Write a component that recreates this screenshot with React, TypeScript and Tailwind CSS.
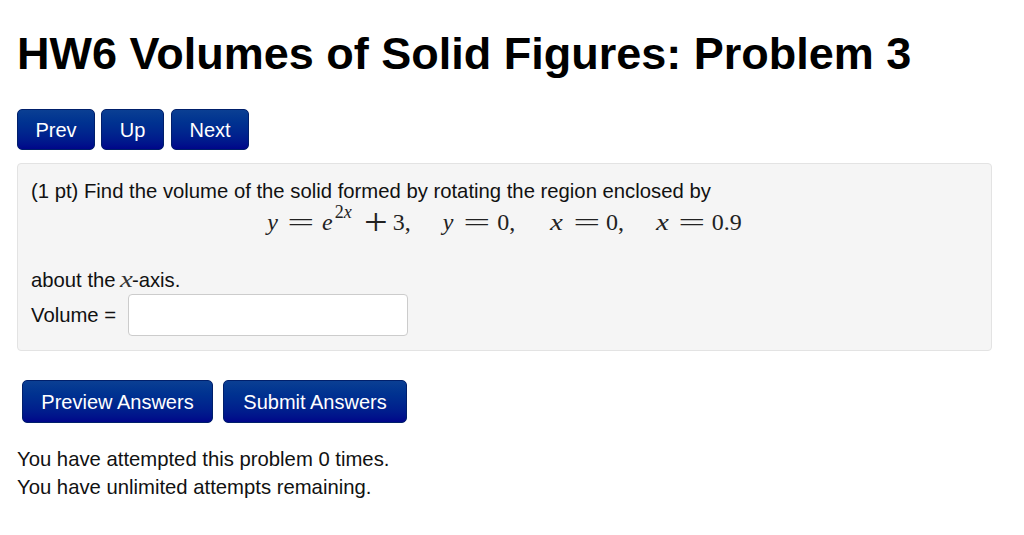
import React from "react";

const btn =
  "flex items-center justify-center rounded-[5px] border border-[#001f6b] bg-gradient-to-b from-[#0b3f93] to-[#00058a] text-white text-[20px] leading-none font-['Liberation_Sans',Arial,sans-serif]";

function V({ c }: { c: string }) {
  return <span className="italic">{c}</span>;
}

function Eq({ ml, mr }: { ml: string; mr: string }) {
  return (
    <span className={`inline-block w-[25px] text-center ${ml} ${mr}`}>
      <span className="inline-block scale-x-[2]">=</span>
    </span>
  );
}

export default function App() {
  return (
    <div className="bg-white min-h-[535px] px-[17px] pt-[30px] text-[#111] font-['Liberation_Sans',Arial,sans-serif]">
      <h1 className="text-[45px] leading-[48px] font-bold text-black">
        HW6 Volumes of Solid Figures: Problem 3
      </h1>
      <div className="mt-[31px] flex gap-[6px]">
        <button className={`${btn} h-[41px] w-[78px]`}>Prev</button>
        <button className={`${btn} h-[41px] w-[63px]`}>Up</button>
        <button className={`${btn} h-[41px] w-[78px] ml-[1px]`}>Next</button>
      </div>
      <div className="mt-[13px] w-[975px] rounded-[4px] border border-[#e3e3e3] bg-[#f5f5f5] px-[13px] pt-[13px] pb-[14px] text-[20.3px] leading-[28px]">
        <div>
          (1 pt) Find the volume of the solid formed by rotating the region
          enclosed by
        </div>
        <div className="flex justify-center items-baseline h-[31px] pt-[3px] text-[24px] leading-[28px] font-['Liberation_Serif','Times_New_Roman',serif] text-[#222] mb-[30px] whitespace-nowrap">
          <span>
            <span className="mr-[2px]">
              <V c="y" />
            </span>
            <Eq ml="ml-[8px]" mr="mr-[9px]" />
            <V c="e" />
            <span className="relative -top-[12px] ml-[2px] text-[18px] leading-none">
              2<V c="x" />
            </span>
            <span className="inline-block w-[22px] text-center ml-[13px]">
              <span className="inline-block scale-x-[1.75] scale-y-[1.6]">+</span>
            </span>
            <span className="ml-[6px]">3,</span>
          </span>
          <span className="ml-[32px]">
            <span className="mr-[2px]">
              <V c="y" />
            </span>
            <Eq ml="ml-[9px]" mr="mr-[8px]" />
            0,
          </span>
          <span className="ml-[36px]">
            <span className="inline-block scale-x-[1.2]">
              <V c="x" />
            </span>
            <Eq ml="ml-[12px]" mr="mr-[7px]" />
            0,
          </span>
          <span className="ml-[33px]">
            <span className="inline-block scale-x-[1.2]">
              <V c="x" />
            </span>
            <Eq ml="ml-[12px]" mr="mr-[7px]" />
            0.9
          </span>
        </div>
        <div>
          about the{" "}
          <span className="inline-block scale-x-[1.2] italic font-['Liberation_Serif','Times_New_Roman',serif] text-[24px] leading-[20px] text-[#333]">
            x
          </span>
          -axis.
        </div>
        <div className="flex items-center h-[42px]">
          <span>Volume =</span>
          <input
            type="text"
            className="ml-[12px] h-[42px] w-[280px] rounded-[4px] border border-[#cccccc] bg-white outline-none"
          />
        </div>
      </div>
      <div className="mt-[29px] ml-[5px] flex gap-[10px]">
        <button className={`${btn} h-[43px] w-[191px]`}>Preview Answers</button>
        <button className={`${btn} h-[43px] w-[184px]`}>Submit Answers</button>
      </div>
      <div className="mt-[22px] text-[20.3px] leading-[28px]">
        <div>You have attempted this problem 0 times.</div>
        <div>You have unlimited attempts remaining.</div>
      </div>
    </div>
  );
}
